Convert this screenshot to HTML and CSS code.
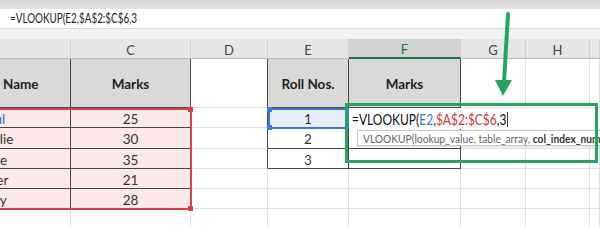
FILE: index.html
```html
<!DOCTYPE html>
<html lang="en">
<head>
    <meta charset="UTF-8">
    <meta name="viewport" content="width=device-width, initial-scale=1.0">
    <title>VLOOKUP</title>
    <link rel="stylesheet" href="styles.css">
</head>
<body>
    <div class="top-strip"></div>
    <div class="formula-bar"><span class="narrow">=VLOOKUP(E2,$A$2:$C$6,3</span></div>
    <div class="gap"></div>

    <div class="sheet">
        <!-- column letters -->
        <div class="cell col-head"></div>
        <div class="cell col-head">C</div>
        <div class="cell col-head">D</div>
        <div class="cell col-head">E</div>
        <div class="cell col-head active">F</div>
        <div class="cell col-head">G</div>
        <div class="cell col-head">H</div>
        <div class="cell col-head"></div>

        <!-- table headers -->
        <div class="cell th dr db">Student Name</div>
        <div class="cell th dr db">Marks</div>
        <div class="cell dr"></div>
        <div class="cell th dr db">Roll Nos.</div>
        <div class="cell th dr db">Marks</div>
        <div class="cell"></div>
        <div class="cell"></div>
        <div class="cell"></div>

        <div class="cell pink dr db name first">Paul</div>
        <div class="cell pink dr db">25</div>
        <div class="cell dr"></div>
        <div class="cell blue dr db">1</div>
        <div class="cell dr db"></div>
        <div class="cell"></div>
        <div class="cell"></div>
        <div class="cell"></div>

        <div class="cell pink dr db name">Charlie</div>
        <div class="cell pink dr db">30</div>
        <div class="cell dr"></div>
        <div class="cell dr db">2</div>
        <div class="cell dr db"></div>
        <div class="cell"></div>
        <div class="cell"></div>
        <div class="cell"></div>

        <div class="cell pink dr db name">Mike</div>
        <div class="cell pink dr db">35</div>
        <div class="cell dr"></div>
        <div class="cell dr db">3</div>
        <div class="cell dr db"></div>
        <div class="cell"></div>
        <div class="cell"></div>
        <div class="cell"></div>

        <div class="cell pink dr db name">Peter</div>
        <div class="cell pink dr db">21</div>
        <div class="cell"></div>
        <div class="cell"></div>
        <div class="cell"></div>
        <div class="cell"></div>
        <div class="cell"></div>
        <div class="cell"></div>

        <div class="cell pink dr db name">Tony</div>
        <div class="cell pink dr db">28</div>
        <div class="cell"></div>
        <div class="cell"></div>
        <div class="cell"></div>
        <div class="cell"></div>
        <div class="cell"></div>
        <div class="cell"></div>

        <div class="cell"></div>
        <div class="cell"></div>
        <div class="cell"></div>
        <div class="cell"></div>
        <div class="cell"></div>
        <div class="cell"></div>
        <div class="cell"></div>
        <div class="cell"></div>
    </div>

    <!-- range highlights while editing -->
    <div class="range range-red">
        <span class="handle tr"></span>
        <span class="handle br"></span>
    </div>
    <div class="range range-blue">
        <span class="handle tl"></span>
        <span class="handle bl"></span>
    </div>

    <div class="edit-box"><span class="narrow">=VLOOKUP(<span class="ref-blue">E2</span>,<span class="ref-red">$A$2:$C$6</span>,3<span class="caret"></span></span></div>
    <div class="tip"><span class="narrow">VLOOKUP(lookup_value, table_array, <b>col_index_num</b>, [range_lookup])</span></div>

    <!-- annotation -->
    <div class="callout"></div>
    <svg class="arrow" width="600" height="227" viewBox="0 0 600 227">
        <line x1="508" y1="14" x2="504" y2="82" stroke="#27a55e" stroke-width="4" stroke-linecap="round"/>
        <polygon points="495,80 512,80 503,96" fill="#27a55e"/>
    </svg>
</body>
</html>
```

FILE: styles.css
```css
body {
    margin: 0;
    width: 600px;
    height: 227px;
    overflow: hidden;
    position: relative;
    background: #fff;
    font-family: Lato, "Liberation Sans", sans-serif;
    color: #333;
}

/* Calibri-like width: Lato squeezed horizontally */
.narrow {
    display: inline-block;
    transform-origin: left center;
}

.top-strip {
    height: 9px;
    background: linear-gradient(#d6d6d6, #e4e4e4);
}

.formula-bar {
    height: 20px;
    line-height: 20px;
    background: #fff;
    padding-left: 10px;
    font-size: 12.5px;
    color: #222;
    box-sizing: border-box;
    border-bottom: 1px solid #dadada;
    white-space: nowrap;
}

.formula-bar .narrow { transform: scaleX(0.79); }

.gap {
    height: 10px;
    background: #f1f1f1;
}

.sheet {
    display: grid;
    grid-template-columns: 150px 120px 77px 81px 112px 65px 64px 1fr;
    grid-template-rows: 20px 49px 20px 21px 20px 20px 20px 20px;
    margin-left: -79px;
    font-size: 13.5px;
}

.cell {
    box-sizing: border-box;
    border-right: 1px solid #e1e1e1;
    border-bottom: 1px solid #e1e1e1;
    display: flex;
    align-items: center;
    justify-content: center;
    padding-top: 2px;
    white-space: nowrap;
    overflow: hidden;
}

.col-head {
    background: #e6e6e6;
    border-right-color: #d0d0d0;
    border-bottom-color: #bdbdbd;
    color: #444;
    font-size: 13px;
}

.col-head.active {
    background: #d3d3d3;
    color: #217346;
    border-bottom: 2px solid #217346;
}

.th {
    background: #d9d9d9;
    font-weight: bold;
    color: #222;
}

.dr { border-right: 1px solid #474747; }
.db { border-bottom: 1px solid #474747; }

.pink { background: #fbe8e9; }
.blue { background: #e8eef9; }

.name { padding-right: 6px; }
.name.first { color: #2f6fc4; }

.range {
    position: absolute;
    box-sizing: border-box;
}

.range-red {
    left: -10px;
    top: 108px;
    width: 202px;
    height: 102px;
    border: 2px solid #d8414a;
}

.range-blue {
    left: 268px;
    top: 108px;
    width: 82px;
    height: 21px;
    border: 2px solid #3c78d8;
}

.handle {
    position: absolute;
    width: 5px;
    height: 5px;
}

.range-red .handle { background: #d8414a; }
.range-blue .handle { background: #3c78d8; }

.handle.tr { right: -3px; top: -3px; }
.handle.br { right: -3px; bottom: -3px; }
.handle.tl { left: -3px; top: -3px; }
.handle.bl { left: -3px; bottom: -3px; }

.edit-box {
    position: absolute;
    left: 349px;
    top: 108px;
    width: 251px;
    height: 21px;
    background: #fff;
    padding-left: 3px;
    box-sizing: border-box;
    font-size: 15px;
    line-height: 22px;
    color: #111;
    white-space: nowrap;
}

.edit-box .narrow { transform: scaleX(0.8); }

.ref-blue { color: #3b73c9; }
.ref-red { color: #d4363f; }

.caret {
    display: inline-block;
    width: 1px;
    height: 15px;
    background: #111;
    vertical-align: -2px;
    margin-left: 1px;
}

.tip {
    position: absolute;
    left: 357px;
    top: 130px;
    width: 250px;
    height: 16px;
    line-height: 15px;
    padding: 0 5px;
    background: #fff;
    border: 1px solid #c8c8c8;
    box-shadow: 1px 1px 2px rgba(0, 0, 0, 0.12);
    font-size: 11.5px;
    color: #666;
    white-space: nowrap;
    box-sizing: border-box;
}

.tip .narrow { transform: scaleX(0.89); }

.tip b { color: #333; }

.callout {
    position: absolute;
    left: 345px;
    top: 103px;
    width: 253px;
    height: 60px;
    box-sizing: border-box;
    border: 3px solid #27a55e;
}

.arrow {
    position: absolute;
    left: 0;
    top: 0;
}
```
